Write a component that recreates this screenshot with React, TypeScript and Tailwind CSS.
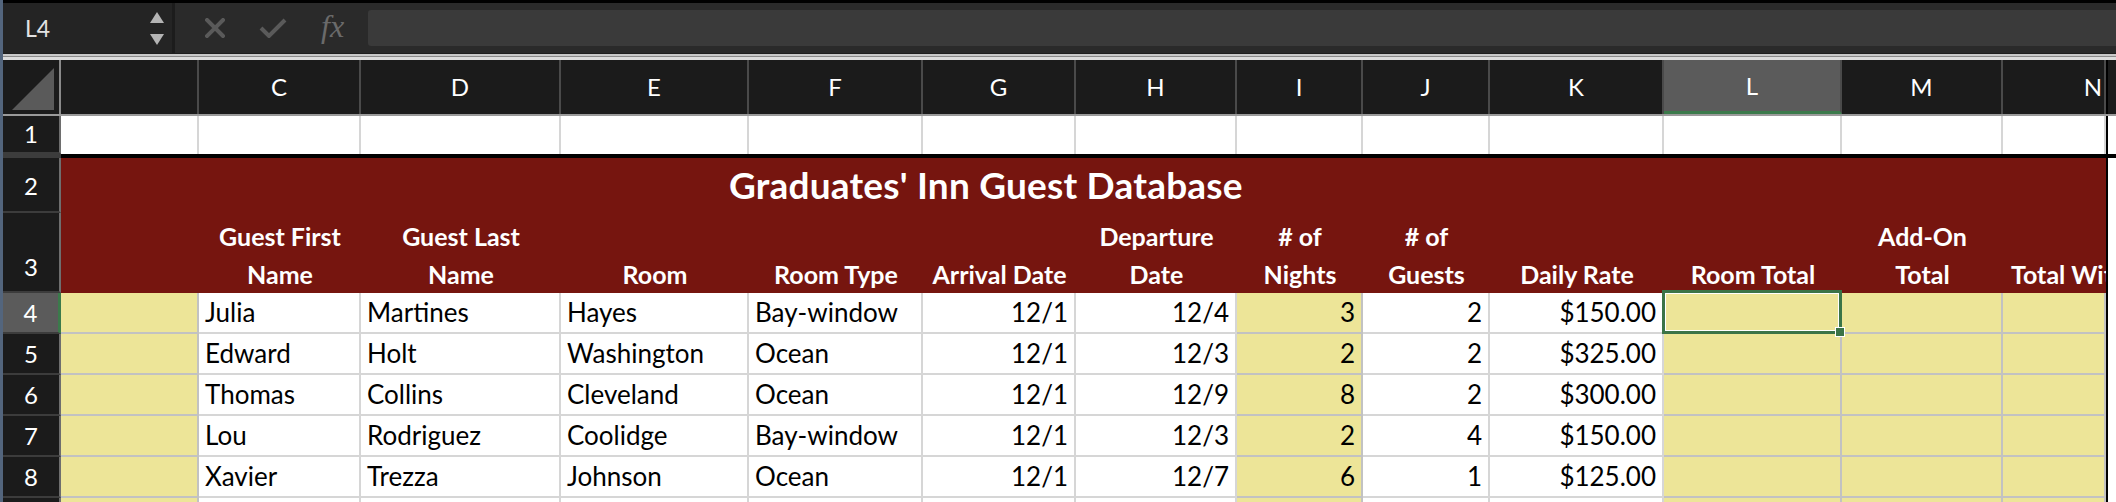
import React from 'react'

type Col = { key: string; w: string; yellow: boolean; head: string[]; right: boolean }

const cols: Col[] = [
  { key: 'B', w: 'w-[138px]', yellow: true, head: [], right: false },
  { key: 'C', w: 'w-[162px]', yellow: false, head: ['Guest First', 'Name'], right: false },
  { key: 'D', w: 'w-[200px]', yellow: false, head: ['Guest Last', 'Name'], right: false },
  { key: 'E', w: 'w-[188px]', yellow: false, head: ['Room'], right: false },
  { key: 'F', w: 'w-[174px]', yellow: false, head: ['Room Type'], right: false },
  { key: 'G', w: 'w-[153px]', yellow: false, head: ['Arrival Date'], right: true },
  { key: 'H', w: 'w-[161px]', yellow: false, head: ['Departure', 'Date'], right: true },
  { key: 'I', w: 'w-[126px]', yellow: true, head: ['# of', 'Nights'], right: true },
  { key: 'J', w: 'w-[127px]', yellow: false, head: ['# of', 'Guests'], right: true },
  { key: 'K', w: 'w-[174px]', yellow: false, head: ['Daily Rate'], right: true },
  { key: 'L', w: 'w-[178px]', yellow: true, head: ['Room Total'], right: true },
  { key: 'M', w: 'w-[161px]', yellow: true, head: ['Add-On', 'Total'], right: true },
  { key: 'N', w: 'w-[103px]', yellow: true, head: [], right: true },
]

const guests = [
  { n: 4, v: ['', 'Julia', 'Martines', 'Hayes', 'Bay-window', '12/1', '12/4', '3', '2', '$150.00', '', '', ''] },
  { n: 5, v: ['', 'Edward', 'Holt', 'Washington', 'Ocean', '12/1', '12/3', '2', '2', '$325.00', '', '', ''] },
  { n: 6, v: ['', 'Thomas', 'Collins', 'Cleveland', 'Ocean', '12/1', '12/9', '8', '2', '$300.00', '', '', ''] },
  { n: 7, v: ['', 'Lou', 'Rodriguez', 'Coolidge', 'Bay-window', '12/1', '12/3', '2', '4', '$150.00', '', '', ''] },
  { n: 8, v: ['', 'Xavier', 'Trezza', 'Johnson', 'Ocean', '12/1', '12/7', '6', '1', '$125.00', '', '', ''] },
]

function RowHead({ n, active, className }: { n?: number; active?: boolean; className: string }) {
  return (
    <div
      className={`w-[58px] shrink-0 flex justify-center border-r-2 border-b-2 border-b-[#3c3c3c] text-[24px] text-white ${
        active ? 'bg-[#5b5b5b] border-r-[#3b7a4b] border-r-[3px]' : 'bg-[#1b1b1b] border-r-[#6e6e6e]'
      } ${className}`}
    >
      {n}
    </div>
  )
}

function Edge({ top }: { top?: boolean }) {
  return (
    <>
      <div className="w-[2px] shrink-0 bg-black" />
      <div className={`w-[8px] shrink-0 ${top ? 'bg-[#1b1b1b]' : 'bg-white'}`} />
    </>
  )
}

function Toolbar() {
  return (
    <div className="h-[50px] shrink-0 flex bg-[#2a2a2a]">
      <div className="w-[169px] shrink-0 flex items-center justify-between bg-[#242424] pl-[22px] pr-[8px]">
        <span className="text-[23px] text-[#e2e2e2]">L4</span>
        <div className="flex flex-col gap-[11px]">
          <svg width="14" height="11" viewBox="0 0 14 11"><polygon points="7,0 14,11 0,11" fill="#b4b4b4" /></svg>
          <svg width="14" height="11" viewBox="0 0 14 11"><polygon points="0,0 14,0 7,11" fill="#b4b4b4" /></svg>
        </div>
      </div>
      <div className="w-[3px] shrink-0 bg-[#1c1c1c]" />
      <div className="w-[193px] shrink-0 flex items-center pl-[30px] gap-[34px]">
        <svg width="20" height="20" viewBox="0 0 20 20">
          <path d="M2 2 L18 18 M18 2 L2 18" stroke="#5a5a5a" strokeWidth="4" strokeLinecap="square" />
        </svg>
        <svg width="28" height="20" viewBox="0 0 28 20">
          <path d="M2 10 L10 18 L26 2" stroke="#5a5a5a" strokeWidth="4" fill="none" />
        </svg>
        <span className="font-['Liberation_Serif',serif] italic text-[32px] leading-none text-[#6a6a6a] -mt-[4px]">fx</span>
      </div>
      <div className="flex-1 my-[7px] bg-[#3a3a3a] rounded-l-[3px]" />
    </div>
  )
}

export default function App() {
  return (
    <div className="w-[2116px] h-[502px] overflow-hidden flex bg-black font-['Lato',sans-serif]">
      <div className="w-[3px] shrink-0 bg-[#53657d]" />
      <div className="w-[2113px] flex flex-col">
        <div className="h-[3px] shrink-0 bg-black" />
        <Toolbar />
        <div className="h-[7px] shrink-0 flex flex-col">
          <div className="h-[1px] bg-[#1e1e1e]" />
          <div className="h-[2px] bg-[#c9c9c9]" />
          <div className="h-[1px] bg-[#8a8a8a]" />
          <div className="h-[3px] bg-[#dcdcdc]" />
        </div>

        {/* column letters */}
        <div className="h-[56px] shrink-0 flex bg-[#1b1b1b] border-b-2 border-[#9a9a9a]">
          <div className="w-[58px] shrink-0 flex items-end justify-end pr-[5px] pb-[4px] border-r-2 border-[#8a8a8a]">
            <svg width="42" height="42" viewBox="0 0 42 42"><polygon points="42,0 42,42 0,42" fill="#5a5a5a" /></svg>
          </div>
          {cols.map((c) => (
            <div
              key={c.key}
              className={`${c.w} shrink-0 flex items-center justify-center text-[24px] text-white border-r-2 ${
                c.key === 'L' ? 'bg-[#5b5b5b] border-b-[3px] border-b-[#3b7a4b] border-r-[#4a4a4a]' : 'border-[#4a4a4a]'
              } ${c.key === 'N' ? 'justify-end pr-[2px]' : ''}`}
            >
              {c.key === 'B' ? '' : c.key}
            </div>
          ))}
          <Edge top />
        </div>

        {/* row 1 */}
        <div className="h-[38px] shrink-0 flex">
          <RowHead n={1} className="items-center" />
          {cols.map((c) => (
            <div key={c.key} className={`${c.w} shrink-0 bg-white border-r-2 border-[#d6d6d6]`} />
          ))}
          <Edge />
        </div>
        <div className="h-[4px] shrink-0 flex">
          <div className="w-[58px] shrink-0 bg-[#3c3c3c]" />
          <div className="flex-1 bg-black" />
        </div>

        {/* row 2: title */}
        <div className="h-[55px] shrink-0 flex">
          <RowHead n={2} className="items-center pt-[2px]" />
          <div className="w-[2045px] shrink-0 bg-[#76150f] flex items-end pb-[6px] pl-[668px]">
            <span className="text-[37px] leading-[44px] font-bold text-white whitespace-nowrap tracking-[0.2px]">
              Graduates' Inn Guest Database
            </span>
          </div>
          <Edge />
        </div>

        {/* row 3: headers */}
        <div className="h-[80px] shrink-0 flex">
          <RowHead n={3} className="items-end pb-[6px]" />
          <div className="w-[2045px] shrink-0 flex bg-[#76150f] overflow-hidden">
            {cols.map((c) => (
              <div
                key={c.key}
                className={`${c.w} shrink-0 flex flex-col justify-end items-center text-[25px] leading-[38px] font-bold text-white whitespace-nowrap ${
                  c.key === 'N' ? 'items-start pl-[8px]' : ''
                }`}
              >
                {c.key === 'N' ? <span>Total With</span> : c.head.map((h) => <span key={h}>{h}</span>)}
              </div>
            ))}
          </div>
          <Edge />
        </div>

        {/* data rows */}
        {guests.map((g) => (
          <div key={g.n} className="h-[41px] shrink-0 flex">
            <RowHead n={g.n} active={g.n === 4} className="items-center" />
            {cols.map((c, i) => (
              <div
                key={c.key}
                className={`${c.w} shrink-0 relative border-r-2 border-b-2 px-[6px] pt-[1px] text-[26px] leading-[37px] text-black whitespace-nowrap ${
                  c.yellow ? 'bg-[#ede598] border-[#c2c2c2]' : 'bg-white border-[#d6d6d6]'
                } ${c.right ? 'text-right' : 'text-left'}`}
              >
                {g.v[i]}
                {g.n === 4 && c.key === 'L' && (
                  <>
                    <div className="absolute -left-[2px] -top-[3px] -right-[2px] -bottom-[2px] border-[3px] border-[#3b7447] z-10">
                      <div className="w-full h-full border border-white" />
                    </div>
                    <div className="absolute -right-[5px] -bottom-[5px] w-[10px] h-[10px] bg-[#3b7447] border border-white z-20" />
                  </>
                )}
              </div>
            ))}
            <Edge />
          </div>
        ))}

        {/* row 9 peeking */}
        <div className="h-[10px] shrink-0 flex">
          <RowHead className="items-center" />
          {cols.map((c) => (
            <div
              key={c.key}
              className={`${c.w} shrink-0 border-r-2 ${c.yellow ? 'bg-[#ede598] border-[#c2c2c2]' : 'bg-white border-[#d6d6d6]'}`}
            />
          ))}
          <Edge />
        </div>
      </div>
    </div>
  )
}
